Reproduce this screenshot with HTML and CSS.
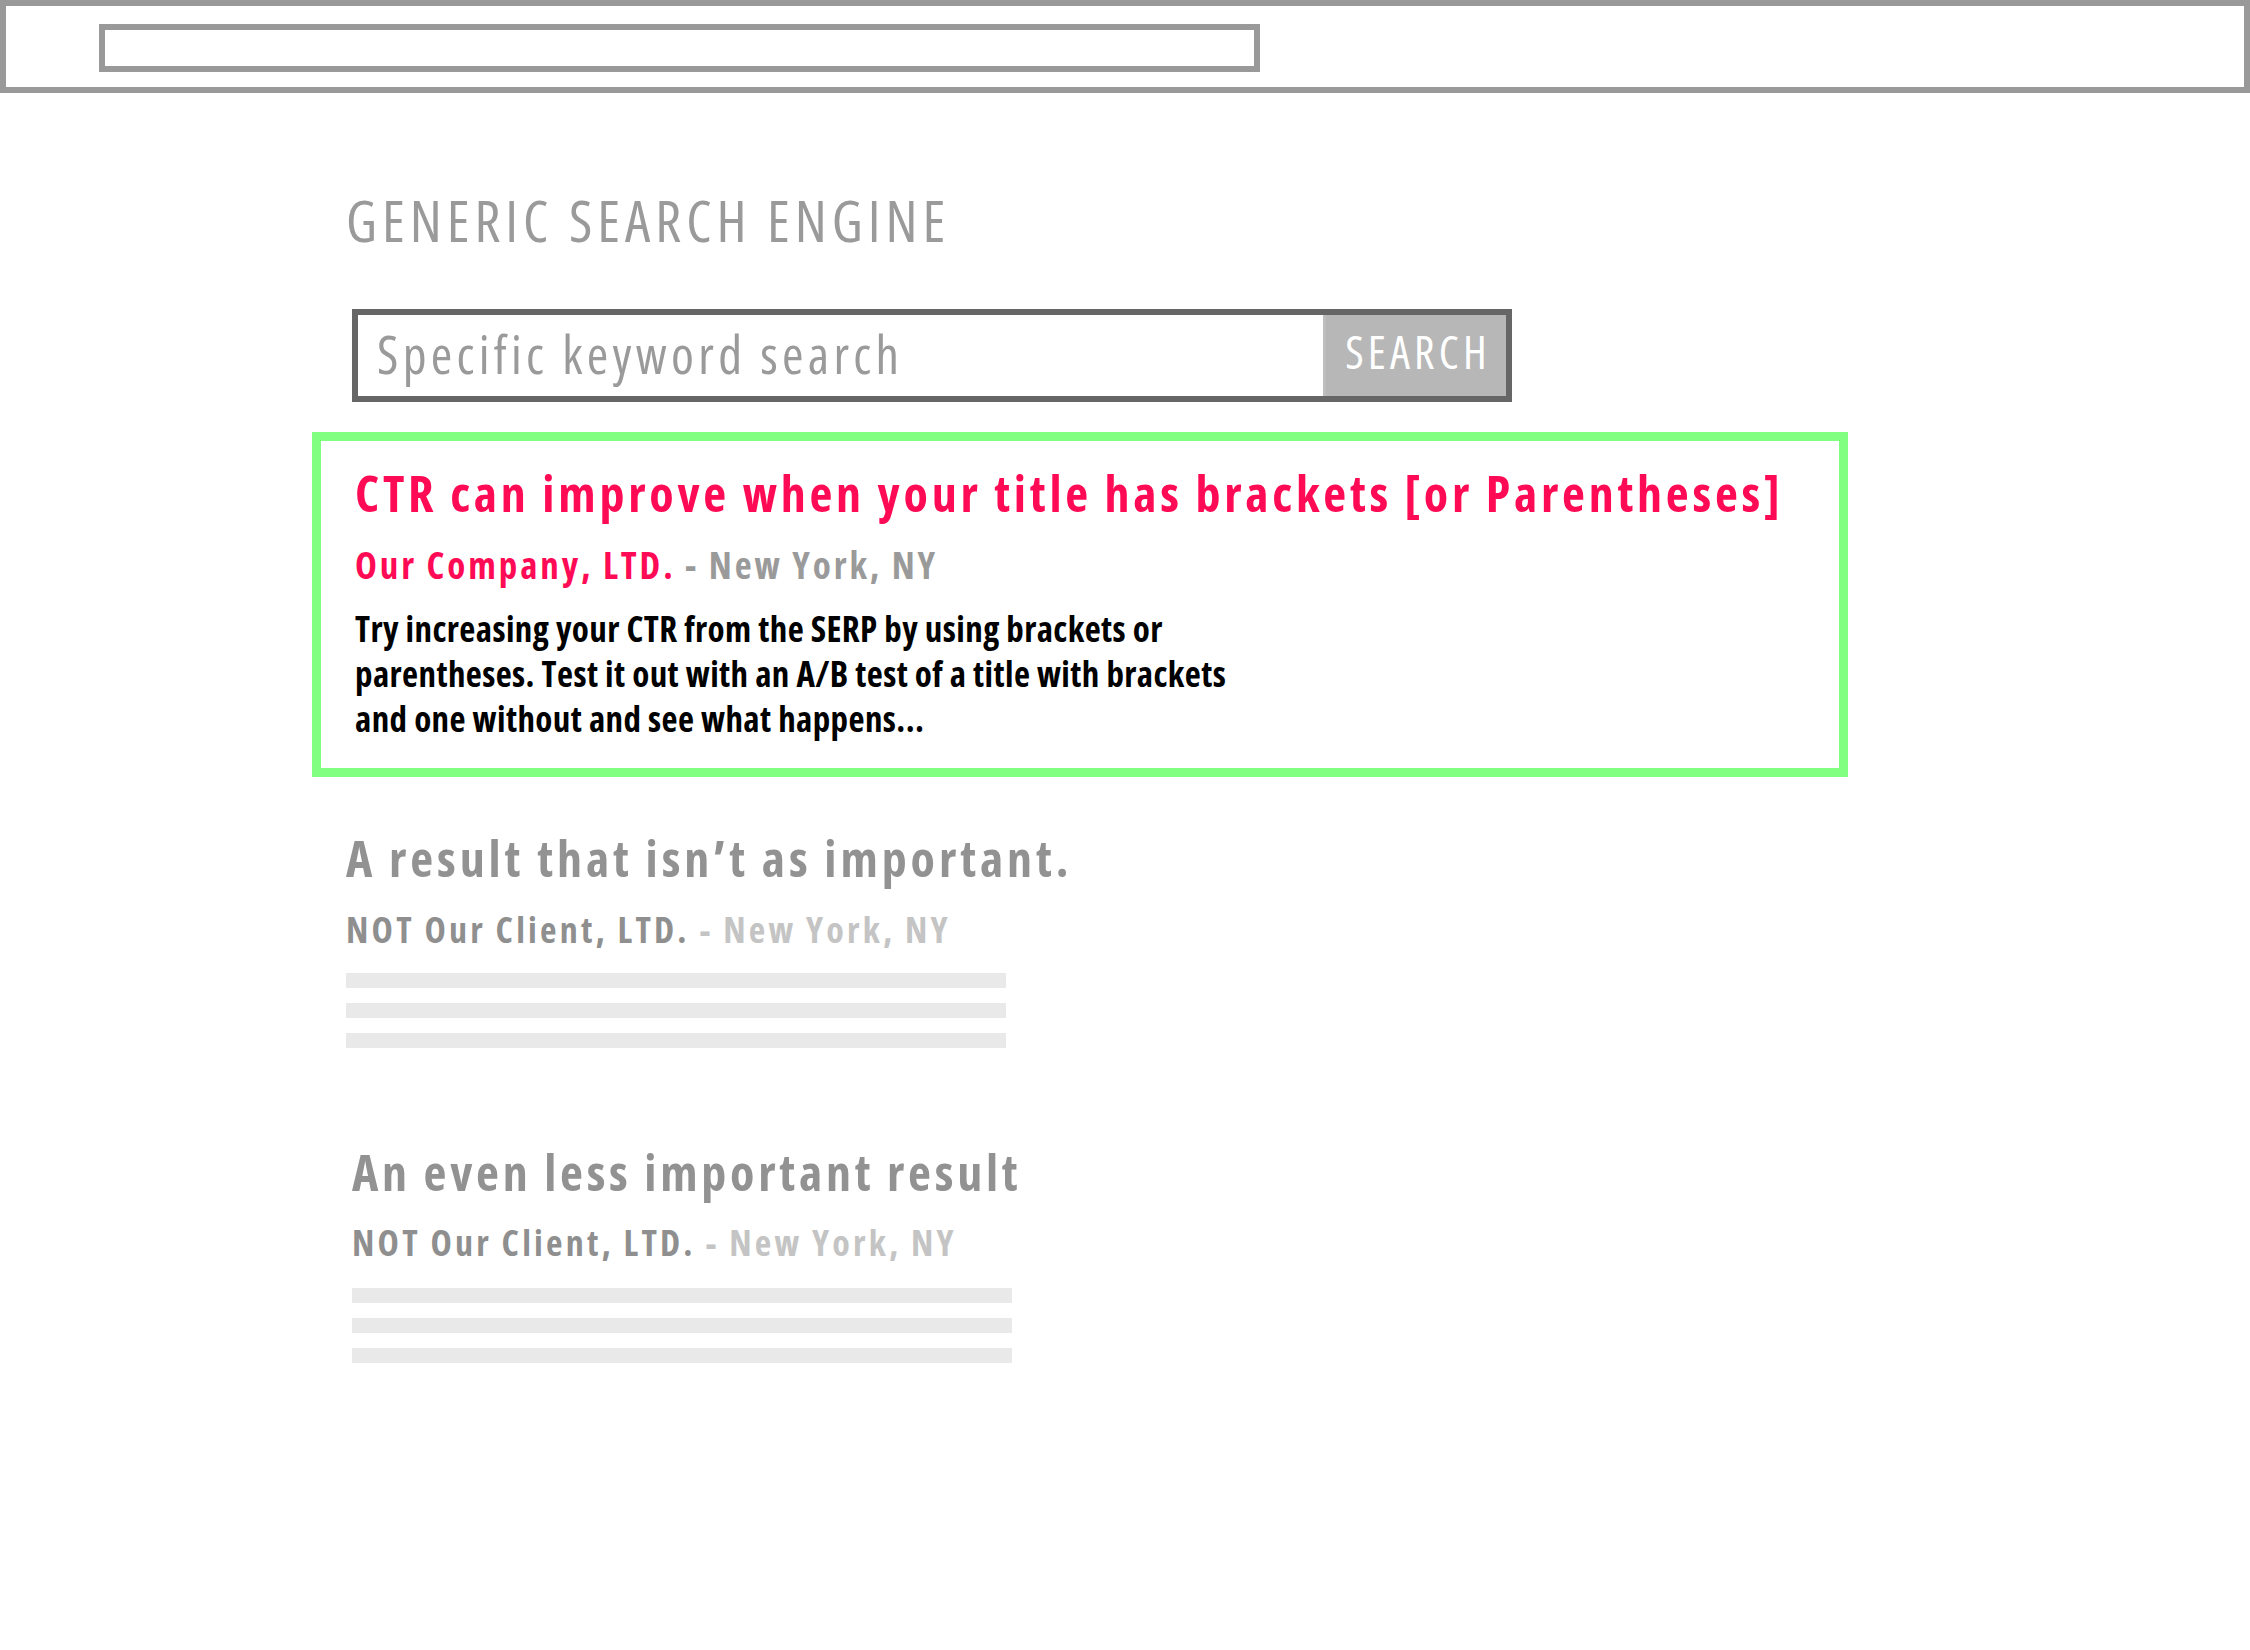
FILE: index.html
```html
<!DOCTYPE html>
<html lang="en">
<head>
<meta charset="utf-8">
<title>Generic Search Engine</title>
<link rel="stylesheet" href="styles.css">
</head>
<body>
<header class="chrome">
  <div class="urlbar"></div>
</header>
<main class="page">
  <h1 class="brand">GENERIC SEARCH ENGINE</h1>
  <div class="searchbox">
    <div class="query">Specific keyword search</div>
    <div class="btn">SEARCH</div>
  </div>
  <section class="result featured">
    <h2 class="r-title">CTR can improve when your title has brackets [or Parentheses]</h2>
    <div class="r-meta"><span class="r-company">Our Company, LTD.</span> <span class="r-loc">- New York, NY</span></div>
    <p class="r-desc">Try increasing your CTR from the SERP by using brackets or<br>parentheses. Test it out with an A/B test of a title with brackets<br>and one without and see what happens...</p>
  </section>
  <section class="result minor">
    <h2 class="r-title">A result that isn’t as important.</h2>
    <div class="r-meta"><span class="r-company">NOT Our Client, LTD.</span> <span class="r-loc">- New York, NY</span></div>
    <div class="bars"><span></span><span></span><span></span></div>
  </section>
  <section class="result minor least">
    <h2 class="r-title">An even less important result</h2>
    <div class="r-meta"><span class="r-company">NOT Our Client, LTD.</span> <span class="r-loc">- New York, NY</span></div>
    <div class="bars"><span></span><span></span><span></span></div>
  </section>
</main>
</body>
</html>
```
FILE: styles.css
```css
* { box-sizing: border-box; }
html, body { margin: 0; padding: 0; background: #fff; }
body {
  font-family: "Open Sans", "Noto Sans", sans-serif;
  font-stretch: 75%;
  color: #000;
}

.chrome {
  height: 93px;
  border: 6px solid #999;
  padding: 18px 0 0 93px;
}
.urlbar {
  width: 1161px;
  height: 48px;
  border: 6px solid #999;
}

.page {
  padding-left: 346px;
  padding-bottom: 100px;
}

.brand {
  margin: 99px 0 0 0;
  font-size: 57px;
  line-height: 57px;
  font-weight: 400;
  letter-spacing: 5px;
  color: #9a9a9a;
}

.searchbox {
  margin: 60px 0 0 6px;
  width: 1160px;
  height: 93px;
  border: 6px solid #666;
  display: flex;
}
.query {
  flex: 1;
  display: flex;
  align-items: center;
  padding: 0 0 3px 19px;
  font-size: 52px;
  line-height: 52px;
  letter-spacing: 4.3px;
  color: #9a9a9a;
}
.btn {
  width: 183px;
  background: #b7b7b7;
  border-left: 3px solid #bebebe;
  display: flex;
  align-items: center;
  justify-content: center;
  padding: 0 0 8px 4px;
  font-size: 45px;
  line-height: 45px;
  letter-spacing: 4.2px;
  color: #fff;
}

.r-title {
  margin: 0;
  font-size: 50px;
  line-height: 50px;
  font-weight: 700;
}
.r-meta {
  font-weight: 700;
}
.r-desc {
  margin: 23px 0 0 0;
  font-size: 35px;
  line-height: 45px;
  font-weight: 700;
  letter-spacing: 0.4px;
  color: #000;
}

.featured {
  margin: 30px 0 0 -34px;
  width: 1536px;
  border: 9px solid #80ff80;
  padding: 27px 20px 27px 34px;
}
.featured .r-title {
  color: #ff0a54;
  letter-spacing: 3.75px;
}
.featured .r-meta {
  margin-top: 28px;
  font-size: 37px;
  line-height: 37px;
  letter-spacing: 2.9px;
}
.featured .r-company { color: #ff0a54; }
.featured .r-loc { color: #9a9a9a; }

.minor { margin-top: 56px; }
.minor .r-title {
  color: #929292;
  letter-spacing: 3.9px;
}
.minor .r-meta {
  margin-top: 29px;
  font-size: 36px;
  line-height: 36px;
  letter-spacing: 3.2px;
}
.minor .r-company { color: #8f8f8f; }
.minor .r-loc { color: #c4c4c4; }

.least {
  margin-top: 99px;
  margin-left: 6px;
}
.least .r-title { letter-spacing: 3.75px; }
.least .r-meta { margin-top: 28px; }

.bars {
  margin-top: 25px;
  display: flex;
  flex-direction: column;
  gap: 15px;
  width: 660px;
}
.least .bars { margin-top: 27px; }
.bars span {
  display: block;
  height: 15px;
  background: #e9e9e9;
}
```
